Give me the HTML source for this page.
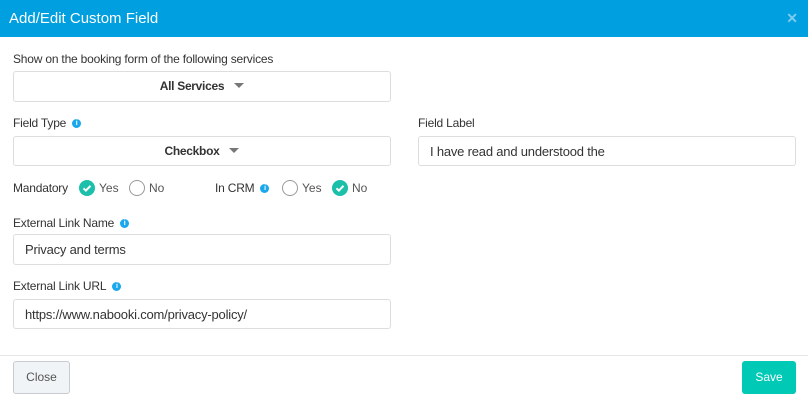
<!DOCTYPE html><html><head><style>
*{box-sizing:border-box;margin:0;padding:0}
body{width:808px;height:401px;background:#fff;font-family:"Liberation Sans",sans-serif;color:#333;position:relative;overflow:hidden}
.a{position:absolute}
.hdr{left:0;top:0;width:808px;height:37px;background:#009fe0;color:#fff;font-size:15px;line-height:37px;padding-left:9px}
.lbl{font-size:12px;color:#333;letter-spacing:-0.2px}
.box{border:1px solid #ddd;border-radius:3px;background:#fff}
.sel{font-size:12px;font-weight:bold;color:#333;text-align:center;line-height:29px;letter-spacing:-0.3px}
.tri{display:inline-block;width:0;height:0;border-left:5px solid transparent;border-right:5px solid transparent;border-top:5px solid #777;margin-left:10px;vertical-align:2px}
.inp{font-size:13px;line-height:29px;padding-left:11px;color:#333;letter-spacing:-0.2px}
.i{display:inline-block;width:9px;height:9px;border-radius:50%;background:#1aa7ec;color:#fff;font-size:7px;line-height:9px;text-align:center;font-weight:bold;vertical-align:middle;margin-left:6px}
.rad{width:16px;height:16px;border-radius:50%;border:1px solid #999}
.rt{font-size:12px;color:#555}
</style></head><body>
<div class="a hdr">Add/Edit Custom Field</div>
<div class="a" style="right:10px;top:10px;color:#7fcaf0;font-size:14px;font-weight:bold">✕</div>
<div class="a lbl" style="left:13px;top:52px">Show on the booking form of the following services</div>
<div class="a box sel" style="left:13px;top:71px;width:378px;height:31px">All Services<span class="tri"></span></div>
<div class="a lbl" style="left:13px;top:116px">Field Type<span class="i">i</span></div>
<div class="a box sel" style="left:13px;top:136px;width:378px;height:30px">Checkbox<span class="tri"></span></div>
<div class="a lbl" style="left:418px;top:116px">Field Label</div>
<div class="a box inp" style="left:418px;top:136px;width:378px;height:30px">I have read and understood the</div>
<div class="a lbl" style="left:13px;top:181px">Mandatory</div>
<svg class="a" style="left:79px;top:180px" width="16" height="16"><circle cx="8" cy="8" r="8" fill="#1cbfa9"/><path d="M4.5 8.3l2.4 2.3 4.6-4.8" stroke="#fff" stroke-width="2" fill="none"/></svg>
<div class="a rt" style="left:99px;top:181px">Yes</div>
<div class="a rad" style="left:129px;top:180px"></div>
<div class="a rt" style="left:149px;top:181px">No</div>
<div class="a lbl" style="left:215px;top:181px">In CRM<span class="i">i</span></div>
<div class="a rad" style="left:282px;top:180px"></div>
<div class="a rt" style="left:302px;top:181px">Yes</div>
<svg class="a" style="left:332px;top:180px" width="16" height="16"><circle cx="8" cy="8" r="8" fill="#1cbfa9"/><path d="M4.5 8.3l2.4 2.3 4.6-4.8" stroke="#fff" stroke-width="2" fill="none"/></svg>
<div class="a rt" style="left:352px;top:181px">No</div>
<div class="a lbl" style="left:13px;top:216px">External Link Name<span class="i">i</span></div>
<div class="a box inp" style="left:13px;top:234px;width:378px;height:31px">Privacy and terms</div>
<div class="a lbl" style="left:13px;top:279px">External Link URL<span class="i">i</span></div>
<div class="a box inp" style="left:13px;top:299px;width:378px;height:30px">https://www.nabooki.com/privacy-policy/</div>
<div class="a" style="left:0;top:355px;width:808px;height:1px;background:#e5e5e5"></div>
<div class="a" style="left:13px;top:361px;width:57px;height:33px;background:#f1f4f7;border:1px solid #c8ccd0;border-radius:3px;font-size:12px;color:#555;text-align:center;line-height:31px">Close</div>
<div class="a" style="left:742px;top:361px;width:54px;height:33px;background:#00c9b6;border-radius:3px;font-size:12px;color:#fff;text-align:center;line-height:33px">Save</div>
</body></html>
